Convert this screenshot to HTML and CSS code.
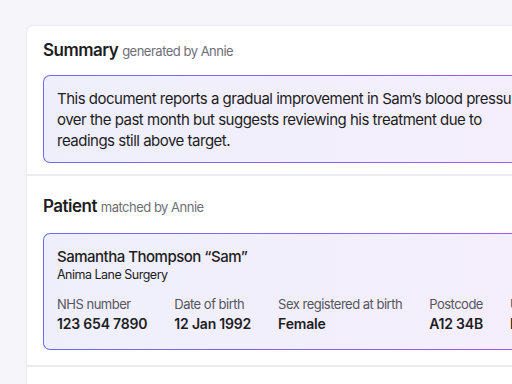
FILE: index.html
```html
<!DOCTYPE html>
<html>
<head>
<meta charset="utf-8">
<link rel="stylesheet" href="styles.css">
</head>
<body>
<div class="page">
  <div class="card">
    <section class="section summary">
      <h2 class="heading">Summary <span class="sub">generated by Annie</span></h2>
      <div class="ai-box summary-box">
        <p class="summary-text">This document reports a gradual improvement in Sam’s blood pressure over the past month but suggests reviewing his treatment due to readings still above target.</p>
      </div>
    </section>
    <section class="section patient">
      <h2 class="heading">Patient <span class="sub">matched by Annie</span></h2>
      <div class="ai-box patient-box">
        <div class="name">Samantha Thompson “Sam”</div>
        <div class="practice">Anima Lane Surgery</div>
        <div class="fields">
          <div class="field"><div class="label">NHS number</div><div class="value">123 654 7890</div></div>
          <div class="field"><div class="label">Date of birth</div><div class="value">12 Jan 1992</div></div>
          <div class="field"><div class="label">Sex registered at birth</div><div class="value">Female</div></div>
          <div class="field"><div class="label">Postcode</div><div class="value">A12 34B</div></div>
          <div class="field"><div class="label">Usual GP</div><div class="value">Dr Patel</div></div>
        </div>
      </div>
    </section>
    <section class="section next"></section>
  </div>
</div>
</body>
</html>
```
FILE: styles.css
```css
* { box-sizing: border-box; }
html, body { margin: 0; padding: 0; }
body {
  background: #f5f5fa;
  font-family: Inter, "Liberation Sans", sans-serif;
  color: #1d1d22;
  letter-spacing: -0.5px;
  width: 512px;
  height: 384px;
  overflow: hidden;
}
.page {
  padding: 25px 0 0 26px;
}
.card {
  width: 620px;
  background: #ffffff;
  border: 1px solid #ececf2;
  border-radius: 8px;
  box-shadow: 0 0 3px rgba(40, 40, 90, 0.04);
}
.section {
  padding: 13px 0 11px 16px;
  border-bottom: 2px solid #ececf0;
}
.patient { padding-top: 19px; padding-bottom: 15px; }
.heading {
  margin: 0 0 13px 0;
  font-size: 17px;
  line-height: 22px;
  font-weight: 600;
}
.patient .heading { margin-bottom: 15px; }
.sub {
  font-size: 13px;
  font-weight: 400;
  color: #6e6e78;
}
.ai-box {
  width: 560px;
  border: 1px solid transparent;
  border-radius: 7px;
  background:
    linear-gradient(90deg, #efeffc 0%, #f3effc 60%, #f6eefc 100%) padding-box,
    linear-gradient(90deg, #6b6cf2 0%, #8e62f4 60%, #a855f7 100%) border-box;
}
.summary-box {
  padding: 12px 14px 11px 13px;
}
.summary-text {
  margin: 0;
  font-size: 15px;
  line-height: 21px;
  width: 478px;
}
.patient-box {
  padding: 13px 13px 15px 13px;
}
.name {
  font-size: 15px;
  line-height: 20px;
  font-weight: 500;
}
.practice {
  font-size: 12.5px;
  line-height: 16px;
  margin-top: 0;
}
.fields {
  display: flex;
  gap: 27px;
  margin-top: 12px;
}
.field {
  flex-shrink: 0;
  white-space: nowrap;
}
.label {
  font-size: 13px;
  line-height: 18px;
  color: #55555f;
}
.value {
  font-size: 14px;
  line-height: 20px;
  font-weight: 600;
  letter-spacing: -0.2px;
  margin-top: 1px;
}
.next { height: 40px; border-bottom: none; }
```
